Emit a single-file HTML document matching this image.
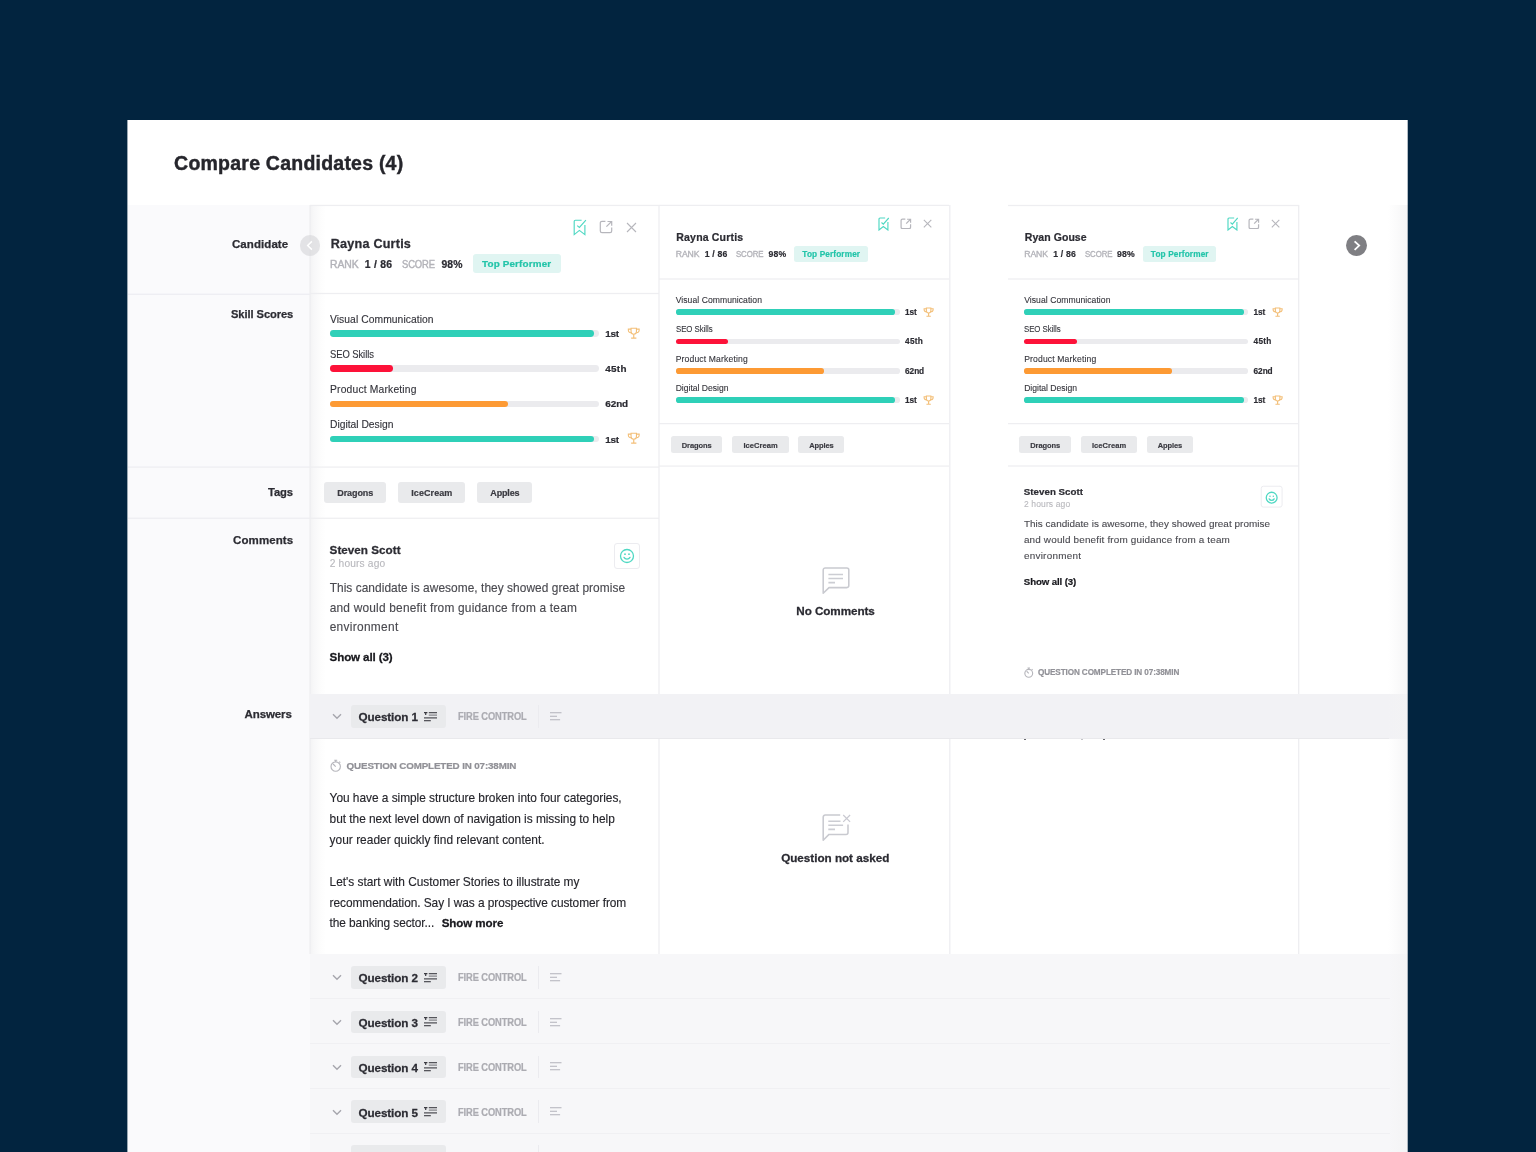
<!DOCTYPE html>
<html><head><meta charset="utf-8"><title>Compare Candidates</title>
<style>
html,body{margin:0;padding:0}
body{width:1536px;height:1152px;overflow:hidden;background:#02243f;position:relative;font-family:"Liberation Sans",sans-serif}
#root{position:absolute;left:0;top:0;width:1536px;height:1152px;overflow:hidden;will-change:transform}
#root div,#root span,#root svg{position:absolute;display:block}
#root span{white-space:nowrap}
#root svg *{vector-effect:non-scaling-stroke}
</style></head><body><div id="root">
<div style="left:128.00px;top:120.00px;width:1280.00px;height:1032.00px;background:#fff;"></div>
<div style="left:127.00px;top:120.00px;width:1.00px;height:1032.00px;background:rgba(255,255,255,.6);"></div>
<span style="left:174.10px;top:152px;font-size:19.50px;line-height:22px;font-weight:700;color:#26262c;letter-spacing:0.228px;-webkit-text-stroke:0.43px;">Compare Candidates (4)</span>
<div style="left:128.00px;top:205.00px;width:182.00px;height:947.00px;background:#fafafc;"></div>
<div style="left:128.00px;top:293px;width:182.00px;height:1px;background:rgba(236,236,241,0.312)"></div>
<div style="left:128.00px;top:294px;width:182.00px;height:1px;background:rgba(236,236,241,0.888)"></div>
<div style="left:128.00px;top:466px;width:182.00px;height:1px;background:rgba(236,236,241,0.504)"></div>
<div style="left:128.00px;top:467px;width:182.00px;height:1px;background:rgba(236,236,241,0.696)"></div>
<div style="left:128.00px;top:517px;width:182.00px;height:1px;background:rgba(236,236,241,0.360)"></div>
<div style="left:128.00px;top:518px;width:182.00px;height:1px;background:rgba(236,236,241,0.840)"></div>
<span style="left:231.90px;top:238px;font-size:11.50px;line-height:12px;font-weight:700;color:#2c2c33;letter-spacing:0.088px;-webkit-text-stroke:0.25px;">Candidate</span>
<span style="left:231.00px;top:308px;font-size:11.50px;line-height:12px;font-weight:700;color:#2c2c33;letter-spacing:-0.089px;transform:scaleX(0.9700);transform-origin:0 0;-webkit-text-stroke:0.25px;">Skill Scores</span>
<span style="left:268.20px;top:486px;font-size:11.50px;line-height:12px;font-weight:700;color:#2c2c33;letter-spacing:-0.130px;transform:scaleX(0.9766);transform-origin:0 0;-webkit-text-stroke:0.25px;">Tags</span>
<span style="left:233.00px;top:534px;font-size:11.50px;line-height:12px;font-weight:700;color:#2c2c33;letter-spacing:0.110px;-webkit-text-stroke:0.25px;">Comments</span>
<span style="left:244.60px;top:708px;font-size:11.50px;line-height:12px;font-weight:700;color:#2c2c33;letter-spacing:-0.123px;-webkit-text-stroke:0.25px;">Answers</span>
<div style="left:310.00px;top:205.00px;width:349.00px;height:749.00px;background:#fff;"></div>
<div style="left:310.00px;top:205.00px;width:16.00px;height:749.00px;background:linear-gradient(90deg,#f3f3f4 0,#f8f8f9 25%,#fdfdfd 70%,#fff 100%);"></div>
<div style="left:309px;top:205.00px;width:1px;height:749.00px;background:rgba(237,237,240,0.575)"></div>
<div style="left:310px;top:205.00px;width:1px;height:749.00px;background:rgba(237,237,240,0.675)"></div>
<div style="left:310.00px;top:204px;width:349.00px;height:1px;background:rgba(237,237,240,0.168)"></div>
<div style="left:310.00px;top:205px;width:349.00px;height:1px;background:rgba(237,237,240,0.960)"></div>
<div style="left:310.00px;top:206px;width:349.00px;height:1px;background:rgba(237,237,240,0.072)"></div>
<div style="left:310.00px;top:292px;width:349.00px;height:1px;background:rgba(237,237,240,0.120)"></div>
<div style="left:310.00px;top:293px;width:349.00px;height:1px;background:rgba(237,237,240,0.960)"></div>
<div style="left:310.00px;top:294px;width:349.00px;height:1px;background:rgba(237,237,240,0.120)"></div>
<div style="left:310.00px;top:466px;width:349.00px;height:1px;background:rgba(237,237,240,0.504)"></div>
<div style="left:310.00px;top:467px;width:349.00px;height:1px;background:rgba(237,237,240,0.696)"></div>
<div style="left:310.00px;top:517px;width:349.00px;height:1px;background:rgba(237,237,240,0.360)"></div>
<div style="left:310.00px;top:518px;width:349.00px;height:1px;background:rgba(237,237,240,0.840)"></div>
<span style="left:330.80px;top:237px;font-size:12.60px;line-height:14px;font-weight:700;color:#2c2c33;letter-spacing:0.216px;-webkit-text-stroke:0.28px;">Rayna Curtis</span>
<span style="left:330.10px;top:259px;font-size:10.40px;line-height:11px;font-weight:400;color:#b3b3b9;letter-spacing:-0.099px;-webkit-text-stroke:0.42px;">RANK</span>
<span style="left:364.80px;top:259px;font-size:10.40px;line-height:11px;font-weight:700;color:#2c2c33;letter-spacing:0.236px;-webkit-text-stroke:0.23px;">1 / 86</span>
<span style="left:402.40px;top:259px;font-size:10.40px;line-height:11px;font-weight:400;color:#b3b3b9;letter-spacing:-0.139px;transform:scaleX(0.9058);transform-origin:0 0;-webkit-text-stroke:0.42px;">SCORE</span>
<span style="left:441.40px;top:259px;font-size:10.40px;line-height:11px;font-weight:700;color:#2c2c33;letter-spacing:0.192px;-webkit-text-stroke:0.23px;">98%</span>
<div style="left:472.50px;top:253.50px;width:88.20px;height:19.30px;background:#e0f5f2;border-radius:3.00px"></div>
<span style="left:482.00px;top:258px;font-size:9.90px;line-height:11px;font-weight:700;color:#22c4a9;letter-spacing:0.152px;-webkit-text-stroke:0.22px;">Top Performer</span>
<svg style="left:573.10px;top:219.00px;" width="14.00" height="17.00" viewBox="0 0 14 17" fill="none"><path d="M8.6 1.2H2.4a1.2 1.2 0 0 0-1.2 1.2V15.6L6.4 11.4L11.9 15.6V6" stroke="#4fd8c3" stroke-width="1.15" stroke-linejoin="miter"/><path d="M4.2 6.6L6.4 8.5L12.9 1.2" stroke="#4fd8c3" stroke-width="1.15"/></svg>
<svg style="left:599.10px;top:220.00px;" width="14.00" height="14.00" viewBox="0 0 14 14" fill="none"><path d="M6.4 1.3H3a1.7 1.7 0 0 0-1.7 1.7v8a1.7 1.7 0 0 0 1.7 1.7h8a1.7 1.7 0 0 0 1.7-1.7V7.5" stroke="#b6b6bc" stroke-width="1.2"/><path d="M7.4 6.7L12.6 1.5M8.5 1.5h4.2v4.3" stroke="#b6b6bc" stroke-width="1.2"/></svg>
<svg style="left:626.20px;top:221.80px;" width="11.00" height="11.00" viewBox="0 0 11 11" fill="none"><path d="M1 1l9 9M10 1l-9 9" stroke="#b6b6bc" stroke-width="1.1"/></svg>
<span style="left:330.00px;top:314px;font-size:10.30px;line-height:11px;font-weight:400;color:#33333a;letter-spacing:0.069px;-webkit-text-stroke:0.12px;">Visual Communication</span>
<div style="left:330.00px;top:330.20px;width:268.80px;height:6.70px;background:#ebebee;border-radius:3.40px"></div>
<div style="left:330.00px;top:330.20px;width:263.50px;height:6.70px;background:#2fd0b8;border-radius:3.40px"></div>
<span style="left:605.30px;top:328px;font-size:9.90px;line-height:11px;font-weight:700;color:#2c2c33;letter-spacing:-0.205px;-webkit-text-stroke:0.22px;">1st</span>
<svg style="left:627.00px;top:326.80px;" width="14.00" height="13.00" viewBox="0 0 14 13" fill="none"><path d="M4.05 1.2H9.45V4.5a2.7 2.7 0 0 1-5.4 0z" stroke="#f3bf78" stroke-width="1.1"/><path d="M4.05 2.1H1.35V3.3a2.4 2.4 0 0 0 2.7 2.4M9.45 2.1h2.7v1.2a2.4 2.4 0 0 1-2.7 2.4" stroke="#f3bf78" stroke-width="1.1"/><path d="M6.75 7.2v3.9M4.1 11.1h5.3" stroke="#f3bf78" stroke-width="1.15"/></svg>
<span style="left:330.00px;top:349px;font-size:10.30px;line-height:11px;font-weight:400;color:#33333a;letter-spacing:-0.081px;transform:scaleX(0.9161);transform-origin:0 0;-webkit-text-stroke:0.12px;">SEO Skills</span>
<div style="left:330.00px;top:365.40px;width:268.80px;height:6.70px;background:#ebebee;border-radius:3.40px"></div>
<div style="left:330.00px;top:365.40px;width:63.20px;height:6.70px;background:#fd1239;border-radius:3.40px"></div>
<span style="left:605.30px;top:363px;font-size:9.90px;line-height:11px;font-weight:700;color:#2c2c33;letter-spacing:0.281px;-webkit-text-stroke:0.22px;">45th</span>
<span style="left:330.00px;top:384px;font-size:10.30px;line-height:11px;font-weight:400;color:#33333a;letter-spacing:0.182px;-webkit-text-stroke:0.12px;">Product Marketing</span>
<div style="left:330.00px;top:400.60px;width:268.80px;height:6.70px;background:#ebebee;border-radius:3.40px"></div>
<div style="left:330.00px;top:400.60px;width:177.70px;height:6.70px;background:#fd9a34;border-radius:3.40px"></div>
<span style="left:605.30px;top:398px;font-size:9.90px;line-height:11px;font-weight:700;color:#2c2c33;letter-spacing:-0.069px;-webkit-text-stroke:0.22px;">62nd</span>
<span style="left:330.00px;top:419px;font-size:10.30px;line-height:11px;font-weight:400;color:#33333a;letter-spacing:-0.011px;-webkit-text-stroke:0.12px;">Digital Design</span>
<div style="left:330.00px;top:435.80px;width:268.80px;height:6.70px;background:#ebebee;border-radius:3.40px"></div>
<div style="left:330.00px;top:435.80px;width:263.50px;height:6.70px;background:#2fd0b8;border-radius:3.40px"></div>
<span style="left:605.30px;top:434px;font-size:9.90px;line-height:11px;font-weight:700;color:#2c2c33;letter-spacing:-0.205px;-webkit-text-stroke:0.22px;">1st</span>
<svg style="left:627.00px;top:432.40px;" width="14.00" height="13.00" viewBox="0 0 14 13" fill="none"><path d="M4.05 1.2H9.45V4.5a2.7 2.7 0 0 1-5.4 0z" stroke="#f3bf78" stroke-width="1.1"/><path d="M4.05 2.1H1.35V3.3a2.4 2.4 0 0 0 2.7 2.4M9.45 2.1h2.7v1.2a2.4 2.4 0 0 1-2.7 2.4" stroke="#f3bf78" stroke-width="1.1"/><path d="M6.75 7.2v3.9M4.1 11.1h5.3" stroke="#f3bf78" stroke-width="1.15"/></svg>
<div style="left:324.10px;top:482.30px;width:61.90px;height:20.50px;background:#e9eaec;border-radius:3.00px"></div>
<span style="left:337.30px;top:488px;font-size:9.00px;line-height:10px;font-weight:700;color:#3a3a41;letter-spacing:-0.101px;-webkit-text-stroke:0.20px;">Dragons</span>
<div style="left:397.80px;top:482.30px;width:67.70px;height:20.50px;background:#e9eaec;border-radius:3.00px"></div>
<span style="left:411.30px;top:488px;font-size:9.00px;line-height:10px;font-weight:700;color:#3a3a41;letter-spacing:0.068px;-webkit-text-stroke:0.20px;">IceCream</span>
<div style="left:477.10px;top:482.30px;width:55.40px;height:20.50px;background:#e9eaec;border-radius:3.00px"></div>
<span style="left:490.30px;top:488px;font-size:9.00px;line-height:10px;font-weight:700;color:#3a3a41;letter-spacing:-0.161px;-webkit-text-stroke:0.20px;">Apples</span>
<span style="left:329.60px;top:543px;font-size:11.70px;line-height:13px;font-weight:700;color:#2c2c33;letter-spacing:0.012px;-webkit-text-stroke:0.26px;">Steven Scott</span>
<span style="left:329.80px;top:558px;font-size:10.20px;line-height:11px;font-weight:400;color:#b8b8bd;letter-spacing:0.152px;-webkit-text-stroke:0.12px;">2 hours ago</span>
<svg style="left:612.50px;top:541.50px;" width="28.00" height="28.00" viewBox="0 0 28 28" fill="none"><rect x="1.5" y="1.5" width="25" height="25" rx="2.5" fill="#fff" stroke="#ececf0" stroke-width="1"/></svg>
<svg style="left:618.90px;top:547.80px;" width="16.00" height="16.00" viewBox="0 0 16 16" fill="none"><circle cx="8" cy="8" r="6.5" stroke="#4fd8c3" stroke-width="1.3"/><circle cx="6" cy="6.2" r="0.9" fill="#4fd8c3"/><circle cx="10" cy="6.2" r="0.9" fill="#4fd8c3"/><path d="M5 9.4a3.4 3.4 0 0 0 6 0" stroke="#4fd8c3" stroke-width="1.3" stroke-linecap="round"/></svg>
<span style="left:329.70px;top:581px;font-size:11.90px;line-height:14px;font-weight:400;color:#4a4a50;letter-spacing:0.050px;-webkit-text-stroke:0.14px;">This candidate is awesome, they showed great promise</span>
<span style="left:329.70px;top:601px;font-size:11.90px;line-height:14px;font-weight:400;color:#4a4a50;letter-spacing:0.205px;-webkit-text-stroke:0.14px;">and would benefit from guidance from a team</span>
<span style="left:329.70px;top:620px;font-size:11.90px;line-height:14px;font-weight:400;color:#4a4a50;letter-spacing:0.311px;-webkit-text-stroke:0.14px;">environment</span>
<span style="left:329.60px;top:651px;font-size:11.60px;line-height:12px;font-weight:700;color:#18181d;letter-spacing:-0.132px;-webkit-text-stroke:0.26px;">Show all (3)</span>
<span style="left:329.60px;top:791px;font-size:11.90px;line-height:14px;font-weight:400;color:#26262c;letter-spacing:-0.030px;-webkit-text-stroke:0.14px;">You have a simple structure broken into four categories,</span>
<span style="left:329.60px;top:812px;font-size:11.90px;line-height:14px;font-weight:400;color:#26262c;letter-spacing:-0.031px;-webkit-text-stroke:0.14px;">but the next level down of navigation is missing to help</span>
<span style="left:329.60px;top:833px;font-size:11.90px;line-height:14px;font-weight:400;color:#26262c;letter-spacing:0.021px;-webkit-text-stroke:0.14px;">your reader quickly find relevant content.</span>
<span style="left:329.60px;top:875px;font-size:11.90px;line-height:14px;font-weight:400;color:#26262c;letter-spacing:-0.019px;-webkit-text-stroke:0.14px;">Let's start with Customer Stories to illustrate my</span>
<span style="left:329.60px;top:896px;font-size:11.90px;line-height:14px;font-weight:400;color:#26262c;letter-spacing:-0.065px;-webkit-text-stroke:0.14px;">recommendation. Say I was a prospective customer from</span>
<span style="left:329.60px;top:916px;font-size:11.90px;line-height:14px;font-weight:400;color:#26262c;letter-spacing:-0.085px;-webkit-text-stroke:0.14px;">the banking sector...</span>
<span style="left:441.70px;top:917px;font-size:11.60px;line-height:12px;font-weight:700;color:#18181d;letter-spacing:-0.090px;-webkit-text-stroke:0.26px;">Show more</span>
<svg style="left:330.00px;top:759.40px;" width="12.00" height="13.00" viewBox="0 0 12 13" fill="none"><circle cx="5.7" cy="7.6" r="4.7" stroke="#b6b6bc" stroke-width="1.15"/><path d="M4.2 1.2h3M5.7 1.2v1.7M9.2 2.6l1.1 1.1M3.1 5l2.6 2.6" stroke="#b6b6bc" stroke-width="1.15"/></svg>
<span style="left:346.60px;top:760px;font-size:9.80px;line-height:11px;font-weight:700;color:#919197;letter-spacing:-0.135px;-webkit-text-stroke:0.22px;">QUESTION COMPLETED IN 07:38MIN</span>
<div style="left:659.00px;top:205.00px;width:290.00px;height:749.00px;background:#fff;"></div>
<div style="left:658px;top:205.00px;width:1px;height:749.00px;background:rgba(237,237,240,0.625)"></div>
<div style="left:659px;top:205.00px;width:1px;height:749.00px;background:rgba(237,237,240,0.625)"></div>
<div style="left:949px;top:205.00px;width:1px;height:749.00px;background:rgba(237,237,240,0.825)"></div>
<div style="left:950px;top:205.00px;width:1px;height:749.00px;background:rgba(237,237,240,0.425)"></div>
<div style="left:659.00px;top:204px;width:290.00px;height:1px;background:rgba(237,237,240,0.216)"></div>
<div style="left:659.00px;top:205px;width:290.00px;height:1px;background:rgba(237,237,240,0.960)"></div>
<div style="left:659.00px;top:206px;width:290.00px;height:1px;background:rgba(237,237,240,0.024)"></div>
<div style="left:659.00px;top:278px;width:290.00px;height:1px;background:rgba(237,237,240,0.600)"></div>
<div style="left:659.00px;top:279px;width:290.00px;height:1px;background:rgba(237,237,240,0.600)"></div>
<div style="left:659.00px;top:422px;width:290.00px;height:1px;background:rgba(237,237,240,0.024)"></div>
<div style="left:659.00px;top:423px;width:290.00px;height:1px;background:rgba(237,237,240,0.960)"></div>
<div style="left:659.00px;top:424px;width:290.00px;height:1px;background:rgba(237,237,240,0.216)"></div>
<div style="left:659.00px;top:465px;width:290.00px;height:1px;background:rgba(237,237,240,0.504)"></div>
<div style="left:659.00px;top:466px;width:290.00px;height:1px;background:rgba(237,237,240,0.696)"></div>
<span style="left:676.33px;top:231px;font-size:10.50px;line-height:12px;font-weight:700;color:#2c2c33;letter-spacing:0.180px;-webkit-text-stroke:0.23px;">Rayna Curtis</span>
<span style="left:675.75px;top:249px;font-size:8.67px;line-height:10px;font-weight:400;color:#b3b3b9;letter-spacing:-0.082px;-webkit-text-stroke:0.35px;">RANK</span>
<span style="left:704.67px;top:249px;font-size:8.67px;line-height:10px;font-weight:700;color:#2c2c33;letter-spacing:0.197px;-webkit-text-stroke:0.19px;">1 / 86</span>
<span style="left:736.00px;top:249px;font-size:8.67px;line-height:10px;font-weight:400;color:#b3b3b9;letter-spacing:-0.116px;transform:scaleX(0.9058);transform-origin:0 0;-webkit-text-stroke:0.35px;">SCORE</span>
<span style="left:768.50px;top:249px;font-size:8.67px;line-height:10px;font-weight:700;color:#2c2c33;letter-spacing:0.160px;-webkit-text-stroke:0.19px;">98%</span>
<div style="left:794.42px;top:245.83px;width:73.50px;height:15.75px;background:#e0f5f2;border-radius:2.50px"></div>
<span style="left:802.33px;top:250px;font-size:8.25px;line-height:9px;font-weight:700;color:#22c4a9;letter-spacing:0.126px;-webkit-text-stroke:0.18px;">Top Performer</span>
<svg style="left:878.25px;top:216.67px;" width="11.67" height="14.17" viewBox="0 0 14 17" fill="none"><path d="M8.6 1.2H2.4a1.2 1.2 0 0 0-1.2 1.2V15.6L6.4 11.4L11.9 15.6V6" stroke="#4fd8c3" stroke-width="1.15" stroke-linejoin="miter"/><path d="M4.2 6.6L6.4 8.5L12.9 1.2" stroke="#4fd8c3" stroke-width="1.15"/></svg>
<svg style="left:899.92px;top:217.50px;" width="11.67" height="11.67" viewBox="0 0 14 14" fill="none"><path d="M6.4 1.3H3a1.7 1.7 0 0 0-1.7 1.7v8a1.7 1.7 0 0 0 1.7 1.7h8a1.7 1.7 0 0 0 1.7-1.7V7.5" stroke="#b6b6bc" stroke-width="1.2"/><path d="M7.4 6.7L12.6 1.5M8.5 1.5h4.2v4.3" stroke="#b6b6bc" stroke-width="1.2"/></svg>
<svg style="left:922.50px;top:219.00px;" width="9.17" height="9.17" viewBox="0 0 11 11" fill="none"><path d="M1 1l9 9M10 1l-9 9" stroke="#b6b6bc" stroke-width="1.1"/></svg>
<span style="left:675.67px;top:295px;font-size:8.58px;line-height:10px;font-weight:400;color:#33333a;letter-spacing:0.057px;-webkit-text-stroke:0.10px;">Visual Communication</span>
<div style="left:675.67px;top:309.33px;width:224.00px;height:5.58px;background:#ebebee;border-radius:2.83px"></div>
<div style="left:675.67px;top:309.33px;width:219.58px;height:5.58px;background:#2fd0b8;border-radius:2.83px"></div>
<span style="left:905.08px;top:308px;font-size:8.25px;line-height:9px;font-weight:700;color:#2c2c33;letter-spacing:-0.171px;-webkit-text-stroke:0.18px;">1st</span>
<svg style="left:923.17px;top:306.50px;" width="11.67" height="10.83" viewBox="0 0 14 13" fill="none"><path d="M4.05 1.2H9.45V4.5a2.7 2.7 0 0 1-5.4 0z" stroke="#f3bf78" stroke-width="1.1"/><path d="M4.05 2.1H1.35V3.3a2.4 2.4 0 0 0 2.7 2.4M9.45 2.1h2.7v1.2a2.4 2.4 0 0 1-2.7 2.4" stroke="#f3bf78" stroke-width="1.1"/><path d="M6.75 7.2v3.9M4.1 11.1h5.3" stroke="#f3bf78" stroke-width="1.15"/></svg>
<span style="left:675.67px;top:324px;font-size:8.58px;line-height:10px;font-weight:400;color:#33333a;letter-spacing:-0.068px;transform:scaleX(0.9161);transform-origin:0 0;-webkit-text-stroke:0.10px;">SEO Skills</span>
<div style="left:675.67px;top:338.67px;width:224.00px;height:5.58px;background:#ebebee;border-radius:2.83px"></div>
<div style="left:675.67px;top:338.67px;width:52.67px;height:5.58px;background:#fd1239;border-radius:2.83px"></div>
<span style="left:905.08px;top:337px;font-size:8.25px;line-height:9px;font-weight:700;color:#2c2c33;letter-spacing:0.234px;-webkit-text-stroke:0.18px;">45th</span>
<span style="left:675.67px;top:354px;font-size:8.58px;line-height:10px;font-weight:400;color:#33333a;letter-spacing:0.152px;-webkit-text-stroke:0.10px;">Product Marketing</span>
<div style="left:675.67px;top:368.00px;width:224.00px;height:5.58px;background:#ebebee;border-radius:2.83px"></div>
<div style="left:675.67px;top:368.00px;width:148.08px;height:5.58px;background:#fd9a34;border-radius:2.83px"></div>
<span style="left:905.08px;top:367px;font-size:8.25px;line-height:9px;font-weight:700;color:#2c2c33;letter-spacing:-0.058px;-webkit-text-stroke:0.18px;">62nd</span>
<span style="left:675.67px;top:383px;font-size:8.58px;line-height:10px;font-weight:400;color:#33333a;letter-spacing:-0.009px;-webkit-text-stroke:0.10px;">Digital Design</span>
<div style="left:675.67px;top:397.33px;width:224.00px;height:5.58px;background:#ebebee;border-radius:2.83px"></div>
<div style="left:675.67px;top:397.33px;width:219.58px;height:5.58px;background:#2fd0b8;border-radius:2.83px"></div>
<span style="left:905.08px;top:396px;font-size:8.25px;line-height:9px;font-weight:700;color:#2c2c33;letter-spacing:-0.171px;-webkit-text-stroke:0.18px;">1st</span>
<svg style="left:923.17px;top:394.50px;" width="11.67" height="10.83" viewBox="0 0 14 13" fill="none"><path d="M4.05 1.2H9.45V4.5a2.7 2.7 0 0 1-5.4 0z" stroke="#f3bf78" stroke-width="1.1"/><path d="M4.05 2.1H1.35V3.3a2.4 2.4 0 0 0 2.7 2.4M9.45 2.1h2.7v1.2a2.4 2.4 0 0 1-2.7 2.4" stroke="#f3bf78" stroke-width="1.1"/><path d="M6.75 7.2v3.9M4.1 11.1h5.3" stroke="#f3bf78" stroke-width="1.15"/></svg>
<div style="left:670.75px;top:436.08px;width:51.58px;height:17.08px;background:#e9eaec;border-radius:2.50px"></div>
<span style="left:681.75px;top:441px;font-size:7.50px;line-height:9px;font-weight:700;color:#3a3a41;letter-spacing:-0.084px;-webkit-text-stroke:0.16px;">Dragons</span>
<div style="left:732.17px;top:436.08px;width:56.42px;height:17.08px;background:#e9eaec;border-radius:2.50px"></div>
<span style="left:743.42px;top:441px;font-size:7.50px;line-height:9px;font-weight:700;color:#3a3a41;letter-spacing:0.056px;-webkit-text-stroke:0.16px;">IceCream</span>
<div style="left:798.25px;top:436.08px;width:46.17px;height:17.08px;background:#e9eaec;border-radius:2.50px"></div>
<span style="left:809.25px;top:441px;font-size:7.50px;line-height:9px;font-weight:700;color:#3a3a41;letter-spacing:-0.134px;-webkit-text-stroke:0.16px;">Apples</span>
<div style="left:1007.50px;top:205.00px;width:291.00px;height:749.00px;background:#fff;"></div>
<div style="left:1298px;top:205.00px;width:1px;height:749.00px;background:rgba(237,237,240,0.925)"></div>
<div style="left:1299px;top:205.00px;width:1px;height:749.00px;background:rgba(237,237,240,0.325)"></div>
<div style="left:1007.50px;top:204px;width:291.00px;height:1px;background:rgba(237,237,240,0.120)"></div>
<div style="left:1007.50px;top:205px;width:291.00px;height:1px;background:rgba(237,237,240,0.960)"></div>
<div style="left:1007.50px;top:206px;width:291.00px;height:1px;background:rgba(237,237,240,0.120)"></div>
<div style="left:1007.50px;top:278px;width:291.00px;height:1px;background:rgba(237,237,240,0.600)"></div>
<div style="left:1007.50px;top:279px;width:291.00px;height:1px;background:rgba(237,237,240,0.600)"></div>
<div style="left:1007.50px;top:422px;width:291.00px;height:1px;background:rgba(237,237,240,0.024)"></div>
<div style="left:1007.50px;top:423px;width:291.00px;height:1px;background:rgba(237,237,240,0.960)"></div>
<div style="left:1007.50px;top:424px;width:291.00px;height:1px;background:rgba(237,237,240,0.216)"></div>
<div style="left:1007.50px;top:465px;width:291.00px;height:1px;background:rgba(237,237,240,0.600)"></div>
<div style="left:1007.50px;top:466px;width:291.00px;height:1px;background:rgba(237,237,240,0.600)"></div>
<span style="left:1024.83px;top:231px;font-size:10.50px;line-height:12px;font-weight:700;color:#2c2c33;letter-spacing:0.054px;-webkit-text-stroke:0.23px;">Ryan Gouse</span>
<span style="left:1024.25px;top:249px;font-size:8.67px;line-height:10px;font-weight:400;color:#b3b3b9;letter-spacing:-0.082px;-webkit-text-stroke:0.35px;">RANK</span>
<span style="left:1053.17px;top:249px;font-size:8.67px;line-height:10px;font-weight:700;color:#2c2c33;letter-spacing:0.197px;-webkit-text-stroke:0.19px;">1 / 86</span>
<span style="left:1084.50px;top:249px;font-size:8.67px;line-height:10px;font-weight:400;color:#b3b3b9;letter-spacing:-0.116px;transform:scaleX(0.9058);transform-origin:0 0;-webkit-text-stroke:0.35px;">SCORE</span>
<span style="left:1117.00px;top:249px;font-size:8.67px;line-height:10px;font-weight:700;color:#2c2c33;letter-spacing:0.160px;-webkit-text-stroke:0.19px;">98%</span>
<div style="left:1142.92px;top:245.83px;width:73.50px;height:15.75px;background:#e0f5f2;border-radius:2.50px"></div>
<span style="left:1150.83px;top:250px;font-size:8.25px;line-height:9px;font-weight:700;color:#22c4a9;letter-spacing:0.126px;-webkit-text-stroke:0.18px;">Top Performer</span>
<svg style="left:1226.75px;top:216.67px;" width="11.67" height="14.17" viewBox="0 0 14 17" fill="none"><path d="M8.6 1.2H2.4a1.2 1.2 0 0 0-1.2 1.2V15.6L6.4 11.4L11.9 15.6V6" stroke="#4fd8c3" stroke-width="1.15" stroke-linejoin="miter"/><path d="M4.2 6.6L6.4 8.5L12.9 1.2" stroke="#4fd8c3" stroke-width="1.15"/></svg>
<svg style="left:1248.42px;top:217.50px;" width="11.67" height="11.67" viewBox="0 0 14 14" fill="none"><path d="M6.4 1.3H3a1.7 1.7 0 0 0-1.7 1.7v8a1.7 1.7 0 0 0 1.7 1.7h8a1.7 1.7 0 0 0 1.7-1.7V7.5" stroke="#b6b6bc" stroke-width="1.2"/><path d="M7.4 6.7L12.6 1.5M8.5 1.5h4.2v4.3" stroke="#b6b6bc" stroke-width="1.2"/></svg>
<svg style="left:1271.00px;top:219.00px;" width="9.17" height="9.17" viewBox="0 0 11 11" fill="none"><path d="M1 1l9 9M10 1l-9 9" stroke="#b6b6bc" stroke-width="1.1"/></svg>
<span style="left:1024.17px;top:295px;font-size:8.58px;line-height:10px;font-weight:400;color:#33333a;letter-spacing:0.057px;-webkit-text-stroke:0.10px;">Visual Communication</span>
<div style="left:1024.17px;top:309.33px;width:224.00px;height:5.58px;background:#ebebee;border-radius:2.83px"></div>
<div style="left:1024.17px;top:309.33px;width:219.58px;height:5.58px;background:#2fd0b8;border-radius:2.83px"></div>
<span style="left:1253.58px;top:308px;font-size:8.25px;line-height:9px;font-weight:700;color:#2c2c33;letter-spacing:-0.171px;-webkit-text-stroke:0.18px;">1st</span>
<svg style="left:1271.67px;top:306.50px;" width="11.67" height="10.83" viewBox="0 0 14 13" fill="none"><path d="M4.05 1.2H9.45V4.5a2.7 2.7 0 0 1-5.4 0z" stroke="#f3bf78" stroke-width="1.1"/><path d="M4.05 2.1H1.35V3.3a2.4 2.4 0 0 0 2.7 2.4M9.45 2.1h2.7v1.2a2.4 2.4 0 0 1-2.7 2.4" stroke="#f3bf78" stroke-width="1.1"/><path d="M6.75 7.2v3.9M4.1 11.1h5.3" stroke="#f3bf78" stroke-width="1.15"/></svg>
<span style="left:1024.17px;top:324px;font-size:8.58px;line-height:10px;font-weight:400;color:#33333a;letter-spacing:-0.068px;transform:scaleX(0.9161);transform-origin:0 0;-webkit-text-stroke:0.10px;">SEO Skills</span>
<div style="left:1024.17px;top:338.67px;width:224.00px;height:5.58px;background:#ebebee;border-radius:2.83px"></div>
<div style="left:1024.17px;top:338.67px;width:52.67px;height:5.58px;background:#fd1239;border-radius:2.83px"></div>
<span style="left:1253.58px;top:337px;font-size:8.25px;line-height:9px;font-weight:700;color:#2c2c33;letter-spacing:0.234px;-webkit-text-stroke:0.18px;">45th</span>
<span style="left:1024.17px;top:354px;font-size:8.58px;line-height:10px;font-weight:400;color:#33333a;letter-spacing:0.152px;-webkit-text-stroke:0.10px;">Product Marketing</span>
<div style="left:1024.17px;top:368.00px;width:224.00px;height:5.58px;background:#ebebee;border-radius:2.83px"></div>
<div style="left:1024.17px;top:368.00px;width:148.08px;height:5.58px;background:#fd9a34;border-radius:2.83px"></div>
<span style="left:1253.58px;top:367px;font-size:8.25px;line-height:9px;font-weight:700;color:#2c2c33;letter-spacing:-0.058px;-webkit-text-stroke:0.18px;">62nd</span>
<span style="left:1024.17px;top:383px;font-size:8.58px;line-height:10px;font-weight:400;color:#33333a;letter-spacing:-0.009px;-webkit-text-stroke:0.10px;">Digital Design</span>
<div style="left:1024.17px;top:397.33px;width:224.00px;height:5.58px;background:#ebebee;border-radius:2.83px"></div>
<div style="left:1024.17px;top:397.33px;width:219.58px;height:5.58px;background:#2fd0b8;border-radius:2.83px"></div>
<span style="left:1253.58px;top:396px;font-size:8.25px;line-height:9px;font-weight:700;color:#2c2c33;letter-spacing:-0.171px;-webkit-text-stroke:0.18px;">1st</span>
<svg style="left:1271.67px;top:394.50px;" width="11.67" height="10.83" viewBox="0 0 14 13" fill="none"><path d="M4.05 1.2H9.45V4.5a2.7 2.7 0 0 1-5.4 0z" stroke="#f3bf78" stroke-width="1.1"/><path d="M4.05 2.1H1.35V3.3a2.4 2.4 0 0 0 2.7 2.4M9.45 2.1h2.7v1.2a2.4 2.4 0 0 1-2.7 2.4" stroke="#f3bf78" stroke-width="1.1"/><path d="M6.75 7.2v3.9M4.1 11.1h5.3" stroke="#f3bf78" stroke-width="1.15"/></svg>
<div style="left:1019.25px;top:436.08px;width:51.58px;height:17.08px;background:#e9eaec;border-radius:2.50px"></div>
<span style="left:1030.25px;top:441px;font-size:7.50px;line-height:9px;font-weight:700;color:#3a3a41;letter-spacing:-0.084px;-webkit-text-stroke:0.16px;">Dragons</span>
<div style="left:1080.67px;top:436.08px;width:56.42px;height:17.08px;background:#e9eaec;border-radius:2.50px"></div>
<span style="left:1091.92px;top:441px;font-size:7.50px;line-height:9px;font-weight:700;color:#3a3a41;letter-spacing:0.056px;-webkit-text-stroke:0.16px;">IceCream</span>
<div style="left:1146.75px;top:436.08px;width:46.17px;height:17.08px;background:#e9eaec;border-radius:2.50px"></div>
<span style="left:1157.75px;top:441px;font-size:7.50px;line-height:9px;font-weight:700;color:#3a3a41;letter-spacing:-0.134px;-webkit-text-stroke:0.16px;">Apples</span>
<span style="left:1023.83px;top:486px;font-size:9.75px;line-height:11px;font-weight:700;color:#2c2c33;letter-spacing:0.010px;-webkit-text-stroke:0.21px;">Steven Scott</span>
<span style="left:1024.00px;top:499px;font-size:8.50px;line-height:10px;font-weight:400;color:#b8b8bd;letter-spacing:0.127px;-webkit-text-stroke:0.10px;">2 hours ago</span>
<svg style="left:1259.58px;top:485.42px;" width="23.33" height="23.33" viewBox="0 0 28 28" fill="none"><rect x="1.5" y="1.5" width="25" height="25" rx="2.5" fill="#fff" stroke="#ececf0" stroke-width="1"/></svg>
<svg style="left:1264.92px;top:490.67px;" width="13.33" height="13.33" viewBox="0 0 16 16" fill="none"><circle cx="8" cy="8" r="6.5" stroke="#4fd8c3" stroke-width="1.3"/><circle cx="6" cy="6.2" r="0.9" fill="#4fd8c3"/><circle cx="10" cy="6.2" r="0.9" fill="#4fd8c3"/><path d="M5 9.4a3.4 3.4 0 0 0 6 0" stroke="#4fd8c3" stroke-width="1.3" stroke-linecap="round"/></svg>
<span style="left:1023.92px;top:518px;font-size:9.92px;line-height:11px;font-weight:400;color:#4a4a50;letter-spacing:0.042px;-webkit-text-stroke:0.12px;">This candidate is awesome, they showed great promise</span>
<span style="left:1023.92px;top:534px;font-size:9.92px;line-height:11px;font-weight:400;color:#4a4a50;letter-spacing:0.171px;-webkit-text-stroke:0.12px;">and would benefit from guidance from a team</span>
<span style="left:1023.92px;top:550px;font-size:9.92px;line-height:11px;font-weight:400;color:#4a4a50;letter-spacing:0.259px;-webkit-text-stroke:0.12px;">environment</span>
<span style="left:1023.83px;top:576px;font-size:9.67px;line-height:11px;font-weight:700;color:#18181d;letter-spacing:-0.110px;-webkit-text-stroke:0.21px;">Show all (3)</span>
<svg style="left:1024.17px;top:667.00px;" width="10.00" height="10.83" viewBox="0 0 12 13" fill="none"><circle cx="5.7" cy="7.6" r="4.7" stroke="#b6b6bc" stroke-width="1.15"/><path d="M4.2 1.2h3M5.7 1.2v1.7M9.2 2.6l1.1 1.1M3.1 5l2.6 2.6" stroke="#b6b6bc" stroke-width="1.15"/></svg>
<span style="left:1038.00px;top:668px;font-size:8.17px;line-height:9px;font-weight:700;color:#919197;letter-spacing:-0.112px;-webkit-text-stroke:0.18px;">QUESTION COMPLETED IN 07:38MIN</span>
<div style="left:1023.80px;top:739.00px;width:2.00px;height:1.00px;background:#6a6a70;"></div>
<div style="left:1081.30px;top:739.00px;width:1.50px;height:1.00px;background:#c4c4c8;"></div>
<div style="left:1103.00px;top:739.00px;width:2.00px;height:1.00px;background:#6a6a70;"></div>
<svg style="left:822.30px;top:566.80px;" width="28.00" height="28.00" viewBox="0 0 28 28" fill="none"><path d="M1.2 26.3V3a2 2 0 0 1 2-2h21.6a2 2 0 0 1 2 2v15.6a2 2 0 0 1-2 2H7z" stroke="#c9cad0" stroke-width="1.55" stroke-linejoin="round"/><path d="M6.4 7.5h14.6M6.4 11.5h14.6M6.4 15.6h6.6" stroke="#cccdd3" stroke-width="1.6"/></svg>
<span style="left:796.25px;top:604px;font-size:11.70px;line-height:13px;font-weight:700;color:#2a2a31;letter-spacing:-0.061px;-webkit-text-stroke:0.26px;">No Comments</span>
<svg style="left:822.10px;top:814.00px;" width="30.00" height="28.00" viewBox="0 0 30 28" fill="none"><path d="M18.2 1H3.2a2 2 0 0 0-2 2V26.2L7 20.4h17a2 2 0 0 0 2-2V10.6" stroke="#c9cad0" stroke-width="1.55" stroke-linejoin="round"/><path d="M6.3 7.3h12.2M6.3 11.3h14.8M6.3 15.4h6.7" stroke="#cccdd3" stroke-width="1.6"/><path d="M21.2 1l6.9 6.9M28.1 1l-6.9 6.9" stroke="#c9c9d1" stroke-width="1.2"/></svg>
<span style="left:781.20px;top:851px;font-size:11.70px;line-height:13px;font-weight:700;color:#2a2a31;letter-spacing:-0.022px;-webkit-text-stroke:0.26px;">Question not asked</span>
<div style="left:310.00px;top:694.00px;width:1098.00px;height:44.50px;background:#f2f2f5;"></div>
<div style="left:310.00px;top:738.00px;width:1079.00px;height:1.00px;background:#e9e9ec;"></div>
<svg style="left:331.60px;top:713.30px;" width="10.00" height="7.00" viewBox="0 0 10 7" fill="none"><path d="M1 1.2l4 4 4-4" stroke="#a6a6ad" stroke-width="1.4"/></svg>
<div style="left:351.00px;top:705.15px;width:94.80px;height:22.50px;background:#e9eaec;border-radius:3px"></div>
<span style="left:358.50px;top:710px;font-size:11.70px;line-height:13px;font-weight:700;color:#2c2c33;letter-spacing:-0.107px;-webkit-text-stroke:0.26px;">Question 1</span>
<svg style="left:424.20px;top:711.70px;" width="14.00" height="10.00" viewBox="0 0 14 10" fill="none"><path d="M0 0.7h3.4M1.7 0.7v2.4" stroke="#3a3a41" stroke-width="1.2"/><path d="M4.8 0.7h8.2" stroke="#3a3a41" stroke-width="1.1"/><path d="M4.8 3.1h8.2" stroke="#77777e" stroke-width="1.1"/><path d="M0 5.9h13" stroke="#3a3a41" stroke-width="1.1"/><path d="M0 8.7h6.8" stroke="#3a3a41" stroke-width="1.1"/></svg>
<span style="left:458.20px;top:711px;font-size:10.40px;line-height:11px;font-weight:700;color:#acacb2;letter-spacing:-0.106px;transform:scaleX(0.8955);transform-origin:0 0;-webkit-text-stroke:0.23px;">FIRE CONTROL</span>
<div style="left:538.00px;top:705.00px;width:1.00px;height:22.80px;background:#ebebef;"></div>
<svg style="left:549.90px;top:711.80px;" width="12.00" height="9.00" viewBox="0 0 12 9" fill="none"><path d="M0 0.8h11.5M0 4.3h7M0 7.7h10.1" stroke="#b3b3ba" stroke-width="1.1"/></svg>
<div style="left:310.00px;top:954.00px;width:1098.00px;height:198.00px;background:#f7f7f9;"></div>
<svg style="left:331.60px;top:974.20px;" width="10.00" height="7.00" viewBox="0 0 10 7" fill="none"><path d="M1 1.2l4 4 4-4" stroke="#a6a6ad" stroke-width="1.4"/></svg>
<div style="left:351.00px;top:966.05px;width:94.80px;height:22.50px;background:#e9eaec;border-radius:3px"></div>
<span style="left:358.50px;top:971px;font-size:11.70px;line-height:13px;font-weight:700;color:#2c2c33;letter-spacing:-0.107px;-webkit-text-stroke:0.26px;">Question 2</span>
<svg style="left:424.20px;top:972.60px;" width="14.00" height="10.00" viewBox="0 0 14 10" fill="none"><path d="M0 0.7h3.4M1.7 0.7v2.4" stroke="#3a3a41" stroke-width="1.2"/><path d="M4.8 0.7h8.2" stroke="#3a3a41" stroke-width="1.1"/><path d="M4.8 3.1h8.2" stroke="#77777e" stroke-width="1.1"/><path d="M0 5.9h13" stroke="#3a3a41" stroke-width="1.1"/><path d="M0 8.7h6.8" stroke="#3a3a41" stroke-width="1.1"/></svg>
<span style="left:458.20px;top:972px;font-size:10.40px;line-height:11px;font-weight:700;color:#acacb2;letter-spacing:-0.106px;transform:scaleX(0.8955);transform-origin:0 0;-webkit-text-stroke:0.23px;">FIRE CONTROL</span>
<div style="left:538.00px;top:965.90px;width:1.00px;height:22.80px;background:#ebebef;"></div>
<svg style="left:549.90px;top:972.70px;" width="12.00" height="9.00" viewBox="0 0 12 9" fill="none"><path d="M0 0.8h11.5M0 4.3h7M0 7.7h10.1" stroke="#b3b3ba" stroke-width="1.1"/></svg>
<svg style="left:331.60px;top:1019.00px;" width="10.00" height="7.00" viewBox="0 0 10 7" fill="none"><path d="M1 1.2l4 4 4-4" stroke="#a6a6ad" stroke-width="1.4"/></svg>
<div style="left:351.00px;top:1010.85px;width:94.80px;height:22.50px;background:#e9eaec;border-radius:3px"></div>
<span style="left:358.50px;top:1016px;font-size:11.70px;line-height:13px;font-weight:700;color:#2c2c33;letter-spacing:-0.107px;-webkit-text-stroke:0.26px;">Question 3</span>
<svg style="left:424.20px;top:1017.40px;" width="14.00" height="10.00" viewBox="0 0 14 10" fill="none"><path d="M0 0.7h3.4M1.7 0.7v2.4" stroke="#3a3a41" stroke-width="1.2"/><path d="M4.8 0.7h8.2" stroke="#3a3a41" stroke-width="1.1"/><path d="M4.8 3.1h8.2" stroke="#77777e" stroke-width="1.1"/><path d="M0 5.9h13" stroke="#3a3a41" stroke-width="1.1"/><path d="M0 8.7h6.8" stroke="#3a3a41" stroke-width="1.1"/></svg>
<span style="left:458.20px;top:1017px;font-size:10.40px;line-height:11px;font-weight:700;color:#acacb2;letter-spacing:-0.106px;transform:scaleX(0.8955);transform-origin:0 0;-webkit-text-stroke:0.23px;">FIRE CONTROL</span>
<div style="left:538.00px;top:1010.70px;width:1.00px;height:22.80px;background:#ebebef;"></div>
<svg style="left:549.90px;top:1017.50px;" width="12.00" height="9.00" viewBox="0 0 12 9" fill="none"><path d="M0 0.8h11.5M0 4.3h7M0 7.7h10.1" stroke="#b3b3ba" stroke-width="1.1"/></svg>
<svg style="left:331.60px;top:1063.80px;" width="10.00" height="7.00" viewBox="0 0 10 7" fill="none"><path d="M1 1.2l4 4 4-4" stroke="#a6a6ad" stroke-width="1.4"/></svg>
<div style="left:351.00px;top:1055.65px;width:94.80px;height:22.50px;background:#e9eaec;border-radius:3px"></div>
<span style="left:358.50px;top:1061px;font-size:11.70px;line-height:13px;font-weight:700;color:#2c2c33;letter-spacing:-0.107px;-webkit-text-stroke:0.26px;">Question 4</span>
<svg style="left:424.20px;top:1062.20px;" width="14.00" height="10.00" viewBox="0 0 14 10" fill="none"><path d="M0 0.7h3.4M1.7 0.7v2.4" stroke="#3a3a41" stroke-width="1.2"/><path d="M4.8 0.7h8.2" stroke="#3a3a41" stroke-width="1.1"/><path d="M4.8 3.1h8.2" stroke="#77777e" stroke-width="1.1"/><path d="M0 5.9h13" stroke="#3a3a41" stroke-width="1.1"/><path d="M0 8.7h6.8" stroke="#3a3a41" stroke-width="1.1"/></svg>
<span style="left:458.20px;top:1062px;font-size:10.40px;line-height:11px;font-weight:700;color:#acacb2;letter-spacing:-0.106px;transform:scaleX(0.8955);transform-origin:0 0;-webkit-text-stroke:0.23px;">FIRE CONTROL</span>
<div style="left:538.00px;top:1055.50px;width:1.00px;height:22.80px;background:#ebebef;"></div>
<svg style="left:549.90px;top:1062.30px;" width="12.00" height="9.00" viewBox="0 0 12 9" fill="none"><path d="M0 0.8h11.5M0 4.3h7M0 7.7h10.1" stroke="#b3b3ba" stroke-width="1.1"/></svg>
<svg style="left:331.60px;top:1108.60px;" width="10.00" height="7.00" viewBox="0 0 10 7" fill="none"><path d="M1 1.2l4 4 4-4" stroke="#a6a6ad" stroke-width="1.4"/></svg>
<div style="left:351.00px;top:1100.45px;width:94.80px;height:22.50px;background:#e9eaec;border-radius:3px"></div>
<span style="left:358.50px;top:1106px;font-size:11.70px;line-height:13px;font-weight:700;color:#2c2c33;letter-spacing:-0.107px;-webkit-text-stroke:0.26px;">Question 5</span>
<svg style="left:424.20px;top:1107.00px;" width="14.00" height="10.00" viewBox="0 0 14 10" fill="none"><path d="M0 0.7h3.4M1.7 0.7v2.4" stroke="#3a3a41" stroke-width="1.2"/><path d="M4.8 0.7h8.2" stroke="#3a3a41" stroke-width="1.1"/><path d="M4.8 3.1h8.2" stroke="#77777e" stroke-width="1.1"/><path d="M0 5.9h13" stroke="#3a3a41" stroke-width="1.1"/><path d="M0 8.7h6.8" stroke="#3a3a41" stroke-width="1.1"/></svg>
<span style="left:458.20px;top:1107px;font-size:10.40px;line-height:11px;font-weight:700;color:#acacb2;letter-spacing:-0.106px;transform:scaleX(0.8955);transform-origin:0 0;-webkit-text-stroke:0.23px;">FIRE CONTROL</span>
<div style="left:538.00px;top:1100.30px;width:1.00px;height:22.80px;background:#ebebef;"></div>
<svg style="left:549.90px;top:1107.10px;" width="12.00" height="9.00" viewBox="0 0 12 9" fill="none"><path d="M0 0.8h11.5M0 4.3h7M0 7.7h10.1" stroke="#b3b3ba" stroke-width="1.1"/></svg>
<svg style="left:331.60px;top:1153.40px;" width="10.00" height="7.00" viewBox="0 0 10 7" fill="none"><path d="M1 1.2l4 4 4-4" stroke="#a6a6ad" stroke-width="1.4"/></svg>
<div style="left:351.00px;top:1145.25px;width:94.80px;height:22.50px;background:#e9eaec;border-radius:3px"></div>
<span style="left:358.50px;top:1150px;font-size:11.70px;line-height:13px;font-weight:700;color:#2c2c33;letter-spacing:-0.107px;-webkit-text-stroke:0.26px;">Question 6</span>
<svg style="left:424.20px;top:1151.80px;" width="14.00" height="10.00" viewBox="0 0 14 10" fill="none"><path d="M0 0.7h3.4M1.7 0.7v2.4" stroke="#3a3a41" stroke-width="1.2"/><path d="M4.8 0.7h8.2" stroke="#3a3a41" stroke-width="1.1"/><path d="M4.8 3.1h8.2" stroke="#77777e" stroke-width="1.1"/><path d="M0 5.9h13" stroke="#3a3a41" stroke-width="1.1"/><path d="M0 8.7h6.8" stroke="#3a3a41" stroke-width="1.1"/></svg>
<span style="left:458.20px;top:1151px;font-size:10.40px;line-height:11px;font-weight:700;color:#acacb2;letter-spacing:-0.106px;transform:scaleX(0.8955);transform-origin:0 0;-webkit-text-stroke:0.23px;">FIRE CONTROL</span>
<div style="left:538.00px;top:1145.10px;width:1.00px;height:22.80px;background:#ebebef;"></div>
<svg style="left:549.90px;top:1151.90px;" width="12.00" height="9.00" viewBox="0 0 12 9" fill="none"><path d="M0 0.8h11.5M0 4.3h7M0 7.7h10.1" stroke="#b3b3ba" stroke-width="1.1"/></svg>
<div style="left:310.00px;top:998.00px;width:1080.00px;height:1.00px;background:#f0f0f3;"></div>
<div style="left:310.00px;top:1043.00px;width:1080.00px;height:1.00px;background:#f0f0f3;"></div>
<div style="left:310.00px;top:1088.00px;width:1080.00px;height:1.00px;background:#f0f0f3;"></div>
<div style="left:310.00px;top:1133.00px;width:1080.00px;height:1.00px;background:#f0f0f3;"></div>
<div style="left:299.9px;top:235.2px;width:20.4px;height:20.4px;border-radius:50%;background:rgba(214,214,217,.64)"></div>
<svg style="left:304.00px;top:239.00px;" width="12.00" height="13.00" viewBox="0 0 12 13" fill="none"><path d="M7.9 2.4L3.7 6.5l4.2 4.1" stroke="#fff" stroke-width="1.5"/></svg>
<div style="left:1346.1px;top:235.1px;width:20.8px;height:20.8px;border-radius:50%;background:#7f7f83"></div>
<svg style="left:1350.00px;top:239.00px;" width="12.00" height="13.00" viewBox="0 0 12 13" fill="none"><path d="M4.6 2.3L9.2 6.6l-4.6 4.3" stroke="#fff" stroke-width="1.8"/></svg>
<div style="left:1388.00px;top:205.00px;width:20.00px;height:947.00px;background:linear-gradient(90deg,rgba(255,255,255,0) 0,rgba(243,243,244,.8) 100%);"></div>
<div style="left:1407.00px;top:120.00px;width:1.00px;height:1032.00px;background:rgba(2,36,63,.3);"></div>
</div></body></html>
